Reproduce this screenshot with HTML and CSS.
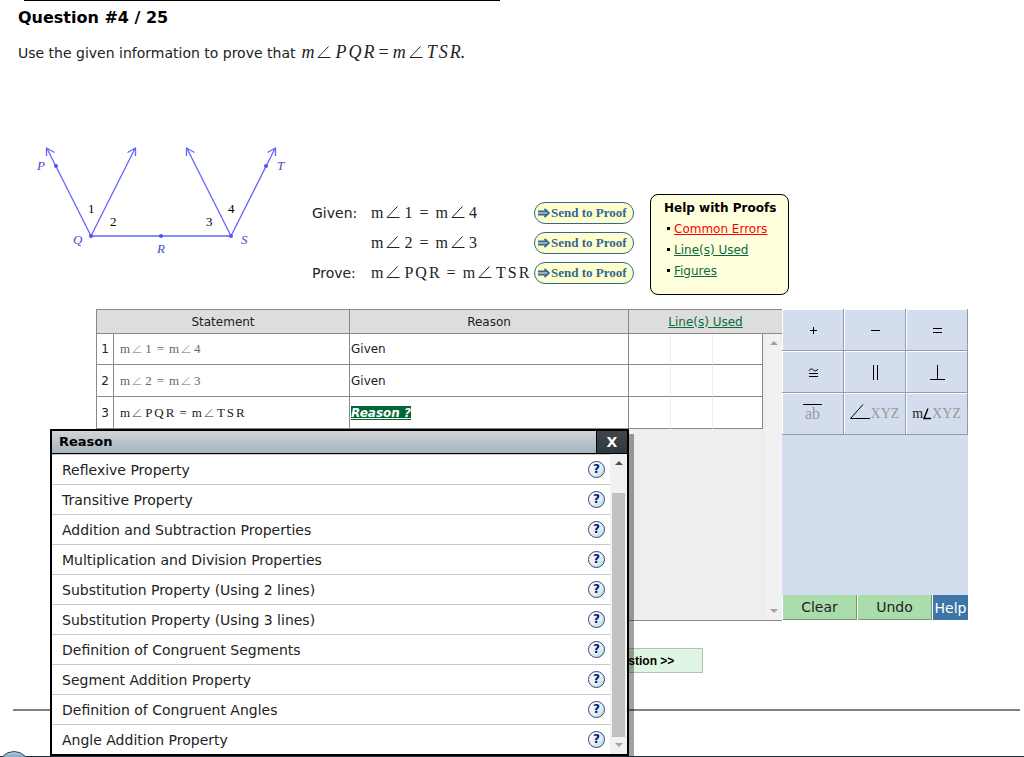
FILE: index.html
```html
<!DOCTYPE html>
<html lang="en">
<head>
    <meta charset="UTF-8">
    <meta name="viewport" content="width=device-width, initial-scale=1.0">
    <title>Question #4 / 25</title>
    <link rel="stylesheet" href="styles.css">
</head>
<body>
    <!-- shared symbols -->
    <svg class="defs" aria-hidden="true">
        <symbol id="angle" viewBox="0 0 14 12"><path d="M11.5 0.5 L1 11.5 H13.5" fill="none" stroke="currentColor"/></symbol>
        <symbol id="arrow" viewBox="0 0 12 10"><path d="M0 3.5H9M0 6.5H9M6.5 0.8L11 5L6.5 9.2" fill="none" stroke="currentColor" stroke-width="1.8"/></symbol>
        <symbol id="up" viewBox="0 0 8 4"><path d="M0 4L4 0L8 4Z" fill="currentColor"/></symbol>
        <symbol id="down" viewBox="0 0 8 4"><path d="M0 0L4 4L8 0Z" fill="currentColor"/></symbol>
    </svg>

    <div class="top-rule"></div>
    <main class="page">
        <h1>Question #4 / 25</h1>
        <p class="task">Use the given information to prove that
            <span class="math title-math"><i>m</i><svg><use href="#angle"/></svg><span class="points"><i>P</i><i>Q</i><i>R</i></span><b>=</b><i>m</i><svg><use href="#angle"/></svg><span class="points"><i>T</i><i>S</i><i>R.</i></span></span>
        </p>

        <section class="problem">
            <svg class="figure" viewBox="0 0 260 120" role="img" aria-label="Rays from Q and S">
                <g class="lines">
                    <path d="M61 96H201M61 96L17 8.500M61 96L105 8.500M201 96L157 8.500M201 96L245 8.500"/>
                    <path class="tips" d="M16.500 16V8L24.500 12.500M97.500 12.500L105.500 8V16M156.500 16V8L164.500 12.500M237.500 12.500L245.500 8V16"/>
                </g>
                <g class="dots">
                    <circle cx="26" cy="26" r="2"/>
                    <circle cx="61" cy="96" r="2"/>
                    <circle cx="131" cy="96" r="2"/>
                    <circle cx="201" cy="96" r="2"/>
                    <circle cx="236" cy="26" r="2"/>
                </g>
                <g class="names">
                    <text x="7" y="30">P</text>
                    <text x="43" y="104">Q</text>
                    <text x="127" y="113">R</text>
                    <text x="211" y="104">S</text>
                    <text x="247" y="30">T</text>
                </g>
                <g class="nums">
                    <text x="58" y="73">1</text>
                    <text x="80" y="86">2</text>
                    <text x="176" y="86">3</text>
                    <text x="198" y="73">4</text>
                </g>
            </svg>

            <div class="givens">
                <span>Given:</span>
                <span class="math">m<svg><use href="#angle"/></svg><span class="points">1</span><b>=</b>m<svg><use href="#angle"/></svg><span class="points">4</span></span>
                <button class="send"><svg><use href="#arrow"/></svg>Send to Proof</button>
                <span></span>
                <span class="math">m<svg><use href="#angle"/></svg><span class="points">2</span><b>=</b>m<svg><use href="#angle"/></svg><span class="points">3</span></span>
                <button class="send"><svg><use href="#arrow"/></svg>Send to Proof</button>
                <span>Prove:</span>
                <span class="math">m<svg><use href="#angle"/></svg><span class="points"><span>P</span><span>Q</span><span>R</span></span><b>=</b>m<svg><use href="#angle"/></svg><span class="points"><span>T</span><span>S</span><span>R</span></span></span>
                <button class="send"><svg><use href="#arrow"/></svg>Send to Proof</button>
            </div>

            <aside class="help-box">
                <h2>Help with Proofs</h2>
                <ul>
                    <li><a class="errors" href="#">Common Errors</a></li>
                    <li><a href="#">Line(s) Used</a></li>
                    <li><a href="#">Figures</a></li>
                </ul>
            </aside>
        </section>

        <section class="workspace">
            <div class="proof">
                <table class="proof-head">
                    <colgroup><col class="c-statement-head"><col><col class="c-lines-head"></colgroup>
                    <tr><th>Statement</th><th>Reason</th><th><a href="#">Line(s) Used</a></th></tr>
                </table>
                <div class="proof-body">
                    <table class="proof-rows">
                        <colgroup><col class="c-num"><col class="c-statement"><col><col class="c-line"><col class="c-line"><col class="c-line-last"></colgroup>
                        <tr>
                            <td>1</td>
                            <td class="done"><span class="math small">m<svg><use href="#angle"/></svg><span class="points">1</span><b>=</b>m<svg><use href="#angle"/></svg><span class="points">4</span></span></td>
                            <td>Given</td><td class="slot"></td><td class="slot"></td><td></td>
                        </tr>
                        <tr>
                            <td>2</td>
                            <td class="done"><span class="math small">m<svg><use href="#angle"/></svg><span class="points">2</span><b>=</b>m<svg><use href="#angle"/></svg><span class="points">3</span></span></td>
                            <td>Given</td><td class="slot"></td><td class="slot"></td><td></td>
                        </tr>
                        <tr>
                            <td>3</td>
                            <td><span class="math small">m<svg><use href="#angle"/></svg><span class="points"><span>P</span><span>Q</span><span>R</span></span><b>=</b>m<svg><use href="#angle"/></svg><span class="points"><span>T</span><span>S</span><span>R</span></span></span></td>
                            <td><a class="pick" href="#">Reason ?</a></td><td class="slot"></td><td class="slot"></td><td></td>
                        </tr>
                    </table>
                    <div class="scroll"><svg><use href="#up"/></svg><svg><use href="#down"/></svg></div>
                </div>
            </div>

            <div class="keypad">
                <div class="keys">
                    <button aria-label="plus"><svg viewBox="0 0 61 41"><path d="M28 21.500H35M31.500 18V25"/></svg></button>
                    <button aria-label="minus"><svg viewBox="0 0 61 41"><path d="M27 21.500H36"/></svg></button>
                    <button aria-label="equals"><svg viewBox="0 0 61 41"><path d="M27 19.500H36M27 23.500H36"/></svg></button>
                    <button aria-label="congruent"><svg viewBox="0 0 61 41"><path d="M27 22.500H36M27 25.500H36M27 20C28 17.500 30 17.500 31.500 19S35 20 36 18"/></svg></button>
                    <button aria-label="parallel"><svg viewBox="0 0 61 41"><path d="M29.500 14V29M33.500 14V29"/></svg></button>
                    <button aria-label="perpendicular"><svg viewBox="0 0 61 41"><path d="M24 28.500H39M31.500 14V28"/></svg></button>
                    <button aria-label="segment"><span class="bar">ab</span></button>
                    <button aria-label="angle"><svg class="big-angle" viewBox="0 0 21 20"><path d="M13 0.500L0.500 14.500H20"/></svg>XYZ</button>
                    <button aria-label="measure of angle"><span class="m">m</span><svg class="mid-angle" viewBox="0 0 9 12"><path d="M5 0.500L1 10.500H8" stroke-width="1.400"/></svg>XYZ</button>
                </div>
                <div class="actions">
                    <button>Clear</button>
                    <button>Undo</button>
                    <button class="help">Help</button>
                </div>
            </div>
        </section>

        <button class="next">Question &gt;&gt;</button>
    </main>
    <hr class="end-rule">

    <div class="dialog" role="dialog" aria-label="Reason">
        <div class="dialog-title"><h2>Reason</h2><button aria-label="Close">X</button></div>
        <div class="dialog-body">
            <ul>
                <li>Reflexive Property <button>?</button></li>
                <li>Transitive Property <button>?</button></li>
                <li>Addition and Subtraction Properties <button>?</button></li>
                <li>Multiplication and Division Properties <button>?</button></li>
                <li>Substitution Property (Using 2 lines) <button>?</button></li>
                <li>Substitution Property (Using 3 lines) <button>?</button></li>
                <li>Definition of Congruent Segments <button>?</button></li>
                <li>Segment Addition Property <button>?</button></li>
                <li>Definition of Congruent Angles <button>?</button></li>
                <li>Angle Addition Property <button>?</button></li>
            </ul>
            <div class="scroll">
                <svg class="active"><use href="#up"/></svg>
                <div class="thumb"></div>
                <svg><use href="#down"/></svg>
            </div>
        </div>
    </div>

    <div class="taskbar"><div class="orb"></div></div>
</body>
</html>
```
FILE: styles.css
```css
* {
    box-sizing: border-box;
}
body {
    position: relative;
    margin: 0;
    min-height: 100vh;
    overflow: hidden;
    background: #fff;
    color: #222;
    font: 14px/20px "DejaVu Sans", Verdana, sans-serif;
}
h1, h2, p, ul {
    margin: 0;
    padding: 0;
}
ul {
    list-style: none;
}
button {
    margin: 0;
    padding: 0;
    border: 0;
    font: inherit;
    color: inherit;
    cursor: pointer;
}
a {
    color: #0a6b3c;
}
.defs {
    display: none;
}
.top-rule {
    width: 476px;
    height: 1px;
    margin-left: 24px;
    background: #000;
}
.page {
    padding: 7px 0 0 18px;
}
h1 {
    font-size: 16px;
    line-height: 20px;
    color: #000;
}
.task {
    display: flex;
    align-items: baseline;
    gap: 6px;
    padding-top: 13px;
    line-height: 24px;
}

/* formulas */
.math {
    display: inline-flex;
    align-items: baseline;
    gap: 3px;
    font: 16px/20px "Liberation Serif", "Times New Roman", serif;
}
.math svg {
    flex: none;
    width: 14px;
    height: 12px;
}
.math b {
    margin: 0 4px;
    font-weight: normal;
}
.points {
    display: inline-flex;
    gap: 2px;
    padding-left: 1px;
}
.title-math {
    font-size: 18px;
}
.title-math b {
    margin: 0 1px;
}
.small {
    font-size: 13px;
    gap: 2px;
}
.small svg {
    width: 10px;
    height: 8px;
}
.small b {
    margin: 0 3px;
}

/* figure, givens and help */
.problem {
    display: flex;
    align-items: flex-start;
    padding-top: 75px;
}
.figure {
    width: 260px;
    height: 120px;
    margin-left: 12px;
}
.lines path {
    fill: none;
    stroke: #6464ff;
    stroke-width: 1.3;
}
.dots circle {
    fill: #5050ff;
}
.figure text {
    font: 13px "Liberation Serif", "Times New Roman", serif;
}
.names text {
    font-style: italic;
    fill: #4848d0;
}
.givens {
    display: grid;
    grid-template-columns: 55px 159px 100px;
    grid-auto-rows: 30px;
    column-gap: 4px;
    align-items: center;
    margin: 58px 0 0 22px;
}
.send {
    display: flex;
    align-items: center;
    gap: 1px;
    height: 22px;
    padding-left: 3px;
    border: 1px solid #369;
    border-radius: 11px;
    background: #ffc;
    color: #369;
    font: bold 13px/20px "Liberation Serif", "Times New Roman", serif;
}
.send svg {
    width: 12px;
    height: 10px;
}
.help-box {
    width: 139px;
    height: 101px;
    margin: 54px 0 0 16px;
    padding: 3px 0 0 13px;
    border: 1px solid #000;
    border-radius: 8px;
    background: #ffffde;
    font-size: 12px;
}
.help-box h2 {
    font-size: 12px;
    line-height: 20px;
    color: #000;
}
.help-box li {
    display: flex;
    align-items: center;
    gap: 4px;
    height: 21px;
    padding-left: 3px;
}
.help-box li::before {
    content: "";
    width: 3px;
    height: 3px;
    background: #000;
}
.help-box .errors {
    color: #f00;
}

/* proof table */
.workspace {
    display: flex;
    height: 312px;
    margin: 14px 56px 0 78px;
}
.proof {
    display: flex;
    flex-direction: column;
    flex: 1;
    border: 1px solid #888;
    border-right: 0;
    background: #eee;
    font-size: 12px;
}
table {
    width: 100%;
    table-layout: fixed;
    border-collapse: separate;
    border-spacing: 0;
}
.c-statement-head { width: 253px; }
.c-lines-head { width: 153px; }
.c-num { width: 17px; }
.c-statement { width: 236px; }
.c-line { width: 42px; }
.c-line-last { width: 50px; }
th {
    height: 24px;
    padding: 0;
    border-right: 1px solid #888;
    border-bottom: 1px solid #888;
    background: #ddd;
    font-weight: normal;
}
th:last-child {
    border-right: 0;
}
.proof-body {
    display: flex;
    flex: 1;
    align-items: flex-start;
}
.proof-rows {
    flex: 1;
    width: auto;
}
td {
    height: 32px;
    padding: 0 0 0 1px;
    border-right: 1px solid #888;
    border-bottom: 1px solid #888;
    background: #fff;
}
tr:first-child td {
    height: 31px;
}
td:first-child {
    padding: 0;
    text-align: center;
}
td:nth-child(2) {
    padding-left: 6px;
}
.done {
    color: #666;
}
.slot {
    border-right-color: #eee;
}
.pick {
    background: #063;
    color: #fff;
    font-weight: bold;
    font-style: italic;
}
.scroll {
    display: flex;
    flex-direction: column;
    justify-content: space-between;
    align-items: center;
    align-self: stretch;
    width: 17px;
    padding: 7px 0;
    background: #f1f1f1;
    color: #a3a3a3;
}
.proof .scroll {
    width: 16px;
    margin-left: 3px;
}
.scroll svg {
    width: 8px;
    height: 4px;
}
.scroll .active {
    color: #505050;
}

/* keypad */
.keypad {
    display: flex;
    flex-direction: column;
    justify-content: space-between;
    width: 186px;
    background: #d4dded;
}
.keys {
    display: grid;
    grid-template-columns: repeat(3, minmax(0, 1fr));
    grid-auto-rows: 42px;
}
.keys button {
    display: flex;
    align-items: center;
    justify-content: center;
    border: solid #949cab;
    border-width: 0 1px 1px 0;
    box-shadow: inset 1px 1px 0 #fff;
    background: #d4dded;
    color: #999;
    font: 14px/20px "Liberation Serif", "Times New Roman", serif;
}
.keys svg {
    flex: none;
    width: 61px;
    height: 41px;
}
.keys path {
    fill: none;
    stroke: #000;
}
.keys .bar {
    border-top: 1px solid #000;
    padding: 0 2px;
    line-height: 18px;
    font-size: 16px;
}
.keys .m {
    color: #222;
}
.keys .big-angle {
    width: 21px;
    height: 20px;
}
.keys .mid-angle {
    width: 9px;
    height: 12px;
}
.actions {
    display: grid;
    grid-template-columns: 75px 75px 1fr;
    height: 26px;
    background: #fff;
    padding-bottom: 1px;
}
.actions button {
    margin-left: 1px;
    border: solid #749874;
    border-width: 0 1px 1px 0;
    background: #abdcab;
}
.actions .help {
    border: 0;
    background: #3c76a6;
    color: #fff;
}
.next {
    display: block;
    height: 25px;
    margin: 27px 0 0 558px;
    padding: 0 28px;
    border: 1px solid #bbb;
    background: #e0f5e3;
    color: #000;
    font: bold 12px/20px "Liberation Sans", Arial, sans-serif;
}
.end-rule {
    height: 2px;
    margin: 36px 4px 0 13px;
    border: 0;
    background: #808080;
}

/* reason picker */
.dialog {
    position: absolute;
    top: 429px;
    left: 50px;
    width: 579px;
    border: 2px solid #000;
    box-shadow: 5px 5px 0 rgba(0, 0, 0, 0.37);
    background: #fff;
}
.dialog-title {
    display: flex;
    height: 23px;
    border-bottom: 1px solid #000;
    background: linear-gradient(#d3d3d6, #a3b4c0);
    color: #000;
}
.dialog-title h2 {
    flex: 1;
    padding-left: 7px;
    font-size: 13px;
    line-height: 22px;
}
.dialog-title button {
    width: 31px;
    border-left: 1px solid #000;
    background: linear-gradient(#45454b, #2a3940);
    color: #fff;
    font-weight: bold;
    font-size: 14px;
}
.dialog-body {
    display: flex;
}
.dialog-body ul {
    flex: 1;
}
.dialog-body li {
    display: flex;
    align-items: center;
    justify-content: space-between;
    height: 30px;
    padding: 0 5px 0 10px;
    border-top: 1px solid #c8c8c8;
}
.dialog-body li button {
    width: 17px;
    height: 17px;
    border: 1px solid #347;
    border-radius: 50%;
    background: linear-gradient(135deg, #fff, #e4eef0 60%, #a8dce0);
    color: #00187c;
    font-weight: bold;
    font-size: 12px;
    line-height: 15px;
}
.thumb {
    flex: 1;
    width: 13px;
    margin: 28px 0 6px;
    background: #c1c1c1;
}

/* desktop edge under the page */
.taskbar {
    position: absolute;
    right: 0;
    bottom: 0;
    left: 0;
    height: 1px;
    background: #1c2c40;
}
.orb {
    position: absolute;
    top: -5px;
    left: -2px;
    width: 32px;
    height: 32px;
    border: 1px solid #1f4466;
    border-radius: 50%;
    background: linear-gradient(#b8cfe0, #5d87a8 30%);
}
```
